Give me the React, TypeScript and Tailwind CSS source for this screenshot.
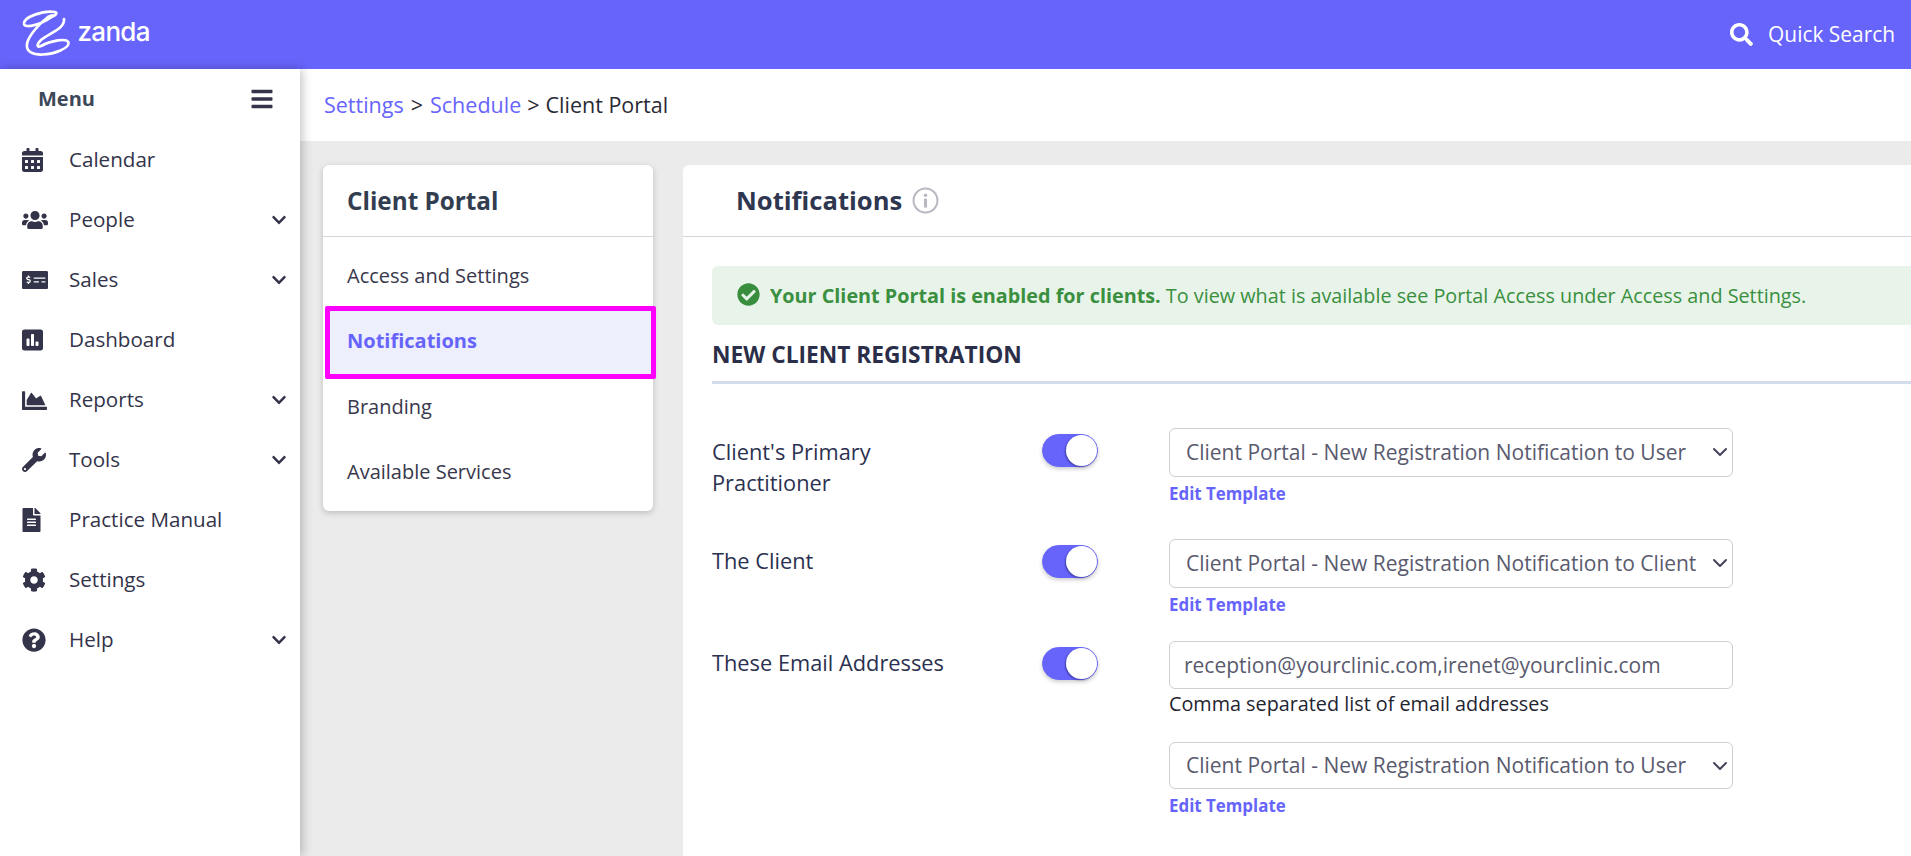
import { type ReactNode } from 'react'
import {
  FaBars,
  FaCalendarAlt,
  FaChartArea,
  FaCheckCircle,
  FaChevronDown,
  FaCog,
  FaFileAlt,
  FaMoneyCheckAlt,
  FaPoll,
  FaQuestionCircle,
  FaSearch,
  FaUsers,
  FaWrench,
} from 'react-icons/fa'
import { ChevronDown } from 'lucide-react'

const font = { fontFamily: '"Open Sans", sans-serif' }

const menu: { label: string; icon: ReactNode; sub?: boolean }[] = [
  { label: 'Calendar', icon: <FaCalendarAlt size={24} className="w-[21px]" /> },
  { label: 'People', icon: <FaUsers size={26} />, sub: true },
  { label: 'Sales', icon: <FaMoneyCheckAlt size={26} />, sub: true },
  { label: 'Dashboard', icon: <FaPoll size={24} className="w-[21px]" /> },
  { label: 'Reports', icon: <FaChartArea size={25} />, sub: true },
  { label: 'Tools', icon: <FaWrench size={24} />, sub: true },
  { label: 'Practice Manual', icon: <FaFileAlt size={24} className="w-[19px]" /> },
  { label: 'Settings', icon: <FaCog size={24} /> },
  { label: 'Help', icon: <FaQuestionCircle size={24} />, sub: true },
]

function Logo(): React.JSX.Element {
  return (
    <svg viewBox="0 0 170 69" className="h-[69px] w-[170px] shrink-0" fill="none" stroke="#fff" strokeWidth="2.7" strokeLinecap="round" strokeLinejoin="round">
      <path d="M43 21 C 51 17 60 14 55 12 C 44 10 23 17 24 24 C 25 29 42 24 50 18 C 54 15 53 14 48 17 C 40 23 28 36 27 44 C 26 52 33 55 43 54.5 C 55 54 69 48 68.5 43 C 68 37 50 41 41 46 C 37 48 36 45 41 40 C 49 33 65 29 64 19" />
      <text x="77.5" y="41" fill="#fff" stroke="none" fontSize="26" fontWeight="500" style={{ fontFamily: 'Inter, sans-serif', letterSpacing: '-0.7px' }}>zanda</text>
    </svg>
  )
}

function Toggle(): React.JSX.Element {
  return (
    <div className="flex h-[33px] w-[56px] items-center justify-end rounded-full border border-[#6764fb] bg-[#6764fb] shadow-[0_2px_4px_rgba(0,0,0,0.2)]">
      <div className="h-[31px] w-[31px] rounded-full bg-white shadow-[-1px_1px_2px_rgba(40,40,120,0.6)]" />
    </div>
  )
}

function TemplateSelect({ value, h = 'h-[49px]' }: { value: string; h?: string }): React.JSX.Element {
  return (
    <div className={`relative w-[564px] ${h}`}>
      <select defaultValue={value} className="h-full w-full appearance-none rounded-[6px] border border-[#cfcfcf] bg-white pl-[16px] text-[21px] text-[#5a5a6e] outline-none">
        <option>{value}</option>
      </select>
      <ChevronDown size={24} strokeWidth={2} className="pointer-events-none absolute right-[1px] top-[12px] text-[#44445a]" />
    </div>
  )
}

function EditTemplate(): React.JSX.Element {
  return <div className="mt-[6px] text-[16.9px] leading-[22px] font-bold text-[#6764fb]">Edit Template</div>
}

export default function App(): React.JSX.Element {
  return (
    <div className="flex h-screen flex-col overflow-hidden bg-[#ebebeb]" style={font}>
      <header className="flex h-[69px] shrink-0 items-center justify-between bg-[#6764fb] pr-[16px] text-white">
        <Logo />
        <div className="flex items-center">
          <FaSearch size={23} className="mr-[15px]" />
          <span className="text-[20.9px]">Quick Search</span>
        </div>
      </header>

      <div className="flex min-h-0 flex-1">
        <aside className="z-10 w-[300px] shrink-0 bg-white shadow-[2px_0_10px_rgba(0,0,0,0.25)]">
          <div className="flex h-[61px] items-center justify-between pb-[2px] pl-[38px] pr-[26px] text-[#3c4858]">
            <span className="text-[20px] font-bold">Menu</span>
            <FaBars size={24} className="text-[#33334a]" />
          </div>
          {menu.map((m) => (
            <div key={m.label} className="flex h-[60px] items-center pl-[22px] pr-[13px] text-[#33334a]">
              <div className="flex w-[47px] shrink-0 items-center">{m.icon}</div>
              <span className="flex-1 pb-[1px] text-[20.6px] font-medium">{m.label}</span>
              {m.sub && <FaChevronDown size={16} />}
            </div>
          ))}
        </aside>

        <main className="flex min-w-0 flex-1 flex-col">
          <div className="flex h-[72px] shrink-0 items-center bg-white pl-[24px] text-[21.5px] text-[#2a2a35]">
            <span className="text-[#6764fb]">Settings</span>
            <span className="mx-[7px]">&gt;</span>
            <span className="text-[#6764fb]">Schedule</span>
            <span className="mx-[6px]">&gt;</span>
            <span>Client Portal</span>
          </div>

          <div className="flex min-h-0 flex-1 items-start pl-[23px] pt-[24px]">
            <section className="h-[346px] w-[330px] shrink-0 rounded-[6px] bg-white shadow-[0_2px_6px_rgba(0,0,0,0.2)]">
              <h2 className="flex h-[72px] items-center border-b border-[#d6d6d6] pl-[24px] pt-[2px] text-[24.3px] font-bold text-[#333d50]">Client Portal</h2>
              <nav className="pt-[7px] text-[20px] text-[#38384c]">
                <div className="flex h-[62px] items-center pl-[24px] pt-[2px]">Access and Settings</div>
                <div className="ml-[2px] flex h-[73px] w-[331px] items-center rounded-[2px] border-[5px] border-[#ff00ff] bg-[#eeeffd] pb-[3px] pl-[17px] font-bold text-[#6764fb]">Notifications</div>
                <div className="flex h-[54px] items-center pl-[24px] pt-[2px]">Branding</div>
                <div className="flex h-[76px] items-center pl-[24px] pt-[2px]">Available Services</div>
              </nav>
            </section>

            <section className="ml-[30px] h-full min-w-0 flex-1 rounded-tl-[6px] bg-white">
              <div className="flex h-[72px] items-center border-b border-[#d6d6da] pl-[53px]">
                <h1 className="pt-[2px] text-[25.6px] font-bold text-[#2f3650]">Notifications</h1>
                <svg viewBox="0 0 26 26" className="ml-[10px] h-[27px] w-[27px]" fill="none">
                  <circle cx="13" cy="13" r="11.5" stroke="#b9b9c3" strokeWidth="2" />
                  <circle cx="13" cy="8" r="1.7" fill="#b9b9c3" />
                  <rect x="11.5" y="11" width="3" height="9" rx="1" fill="#b9b9c3" />
                </svg>
              </div>

              <div className="pl-[29px] pt-[29px]">
                <div className="flex h-[59px] items-center rounded-l-[6px] bg-[#e8f4e9] pl-[25px] text-[19.8px] text-[#3a8f40]">
                  <FaCheckCircle size={23} className="mr-[10px] -translate-y-[1px] text-[#388e3c]" />
                  <span><b className="font-bold">Your Client Portal is enabled for clients.</b> To view what is available see Portal Access under Access and Settings.</span>
                </div>

                <h3 className="flex h-[59px] items-center border-b-[3px] border-[#d2dcea] pt-[5px] text-[22.75px] font-bold text-[#2b2e48]">NEW CLIENT REGISTRATION</h3>

                <div className="mt-[44px] flex text-[21.8px] font-medium text-[#2b3150]">
                  <div className="w-[330px] pt-[8px] pr-[60px] leading-[31px]">Client's Primary Practitioner</div>
                  <div className="w-[127px] pt-[6px]"><Toggle /></div>
                  <div className="font-normal">
                    <TemplateSelect value="Client Portal - New Registration Notification to User" />
                    <EditTemplate />
                  </div>
                </div>

                <div className="mt-[34px] flex text-[21.8px] font-medium text-[#2b3150]">
                  <div className="w-[330px] pt-[6px] leading-[31px]">The Client</div>
                  <div className="w-[127px] pt-[6px]"><Toggle /></div>
                  <div className="font-normal">
                    <TemplateSelect value="Client Portal - New Registration Notification to Client" />
                    <EditTemplate />
                  </div>
                </div>

                <div className="mt-[25px] flex text-[21.8px] font-medium text-[#2b3150]">
                  <div className="w-[330px] pt-[6px] leading-[31px]">These Email Addresses</div>
                  <div className="w-[127px] pt-[6px]"><Toggle /></div>
                  <div className="font-normal">
                    <input readOnly value="reception@yourclinic.com,irenet@yourclinic.com" className="h-[48px] w-[564px] rounded-[6px] border border-[#cfcfcf] bg-white pl-[14px] text-[21px] text-[#5a5a6e] outline-none" />
                    <div className="leading-[30px] text-[19.8px] text-[#1f2430]">Comma separated list of email addresses</div>
                    <div className="mt-[23px]">
                      <TemplateSelect value="Client Portal - New Registration Notification to User" h="h-[47px]" />
                    </div>
                    <EditTemplate />
                  </div>
                </div>
              </div>
            </section>
          </div>
        </main>
      </div>
    </div>
  )
}
